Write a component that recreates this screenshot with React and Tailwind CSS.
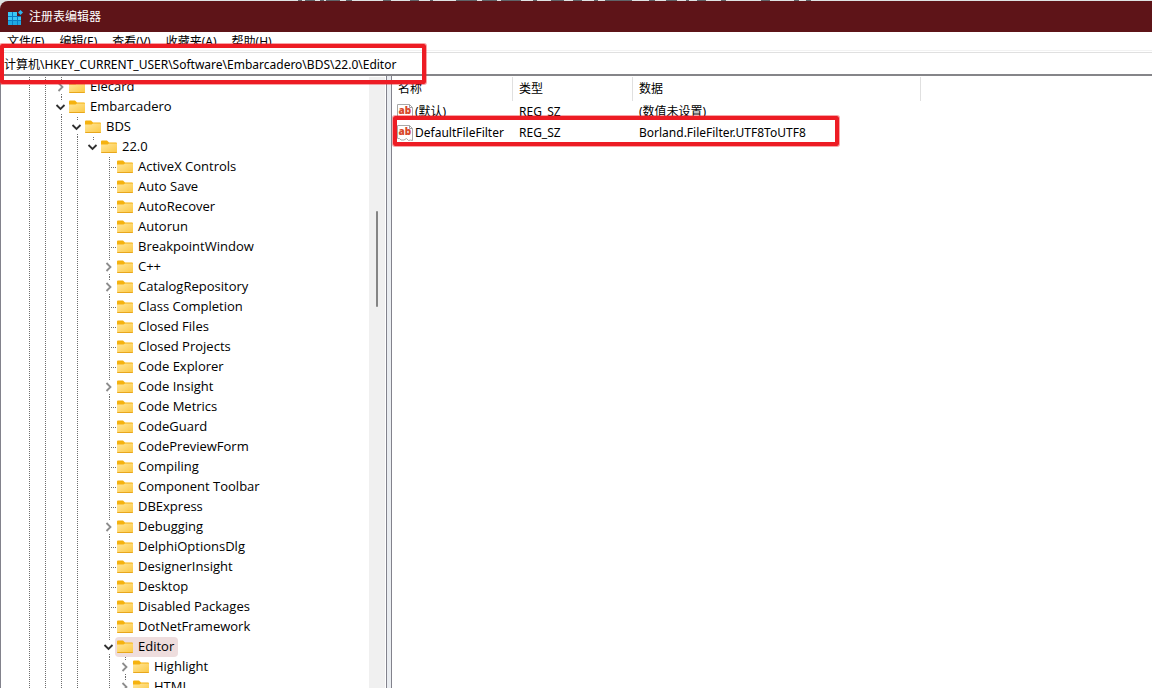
import React from "react";

const TREE = [
  { name: "Elecard", depth: 2, state: "closed" },
  { name: "Embarcadero", depth: 2, state: "open" },
  { name: "BDS", depth: 3, state: "open" },
  { name: "22.0", depth: 4, state: "open", last: true },
  { name: "ActiveX Controls", depth: 5 },
  { name: "Auto Save", depth: 5 },
  { name: "AutoRecover", depth: 5 },
  { name: "Autorun", depth: 5 },
  { name: "BreakpointWindow", depth: 5 },
  { name: "C++", depth: 5, state: "closed" },
  { name: "CatalogRepository", depth: 5, state: "closed" },
  { name: "Class Completion", depth: 5 },
  { name: "Closed Files", depth: 5 },
  { name: "Closed Projects", depth: 5 },
  { name: "Code Explorer", depth: 5 },
  { name: "Code Insight", depth: 5, state: "closed" },
  { name: "Code Metrics", depth: 5 },
  { name: "CodeGuard", depth: 5 },
  { name: "CodePreviewForm", depth: 5 },
  { name: "Compiling", depth: 5 },
  { name: "Component Toolbar", depth: 5 },
  { name: "DBExpress", depth: 5 },
  { name: "Debugging", depth: 5, state: "closed" },
  { name: "DelphiOptionsDlg", depth: 5 },
  { name: "DesignerInsight", depth: 5 },
  { name: "Desktop", depth: 5 },
  { name: "Disabled Packages", depth: 5 },
  { name: "DotNetFramework", depth: 5 },
  { name: "Editor", depth: 5, state: "open", selected: true },
  { name: "Highlight", depth: 6, state: "closed" },
  { name: "HTML", depth: 6, state: "closed" },
];

const VALUES = [
  { name: "(默认)", type: "REG_SZ", data: "(数值未设置)" },
  {
    name: "DefaultFileFilter",
    type: "REG_SZ",
    data: "Borland.FileFilter.UTF8ToUTF8",
  },
];

const MENU = ["文件(F)", "编辑(E)", "查看(V)", "收藏夹(A)", "帮助(H)"];

const RegeditIcon = () => (
  <svg className="h-4 w-4" viewBox="0 0 16 16" aria-hidden="true">
    <path d="M1 3h9v4h4v9H1z" fill="#0a7cc4" />
    <path
      d="M1 3h4v4H1zM6 3h4v4H6zM1 8h4v3H1zM6 8h4v3H6zM11 8h3v3h-3zM1 12h4v4H1zM6 12h4v4H6zM11 12h3v4h-3z"
      fill="#3cc8f4"
    />
    <path d="M1 12h4v4H1zM6 12h4v4H6zM11 12h3v4h-3z" fill="#1fa6e2" />
    <path d="M13.5 1l2.5 2.5L13.5 6 11 3.5z" fill="#2fb4ec" />
  </svg>
);

const FolderIcon = () => (
  <svg className="h-4 w-4 shrink-0" viewBox="0 0 16 16" aria-hidden="true">
    <defs>
      <linearGradient id="folder" x1="0" y1="0" x2="1" y2="1">
        <stop offset="0" stopColor="#ffe69a" />
        <stop offset="1" stopColor="#fcc842" />
      </linearGradient>
    </defs>
    <path d="M0 2.5Q0 1.5 1 1.5h5L8 3.5h7q1 0 1 1V8H0z" fill="#f5b20f" />
    <path d="M0 5.5h6.5L8 4.5h8V13q0 1-1 1H1q-1 0-1-1z" fill="url(#folder)" />
    <path d="M0 13h16q0 1-1 1H1q-1 0-1-1z" fill="#e8a71c" />
  </svg>
);

const StringIcon = () => (
  <svg className="h-4 w-4 shrink-0" viewBox="0 0 16 16" aria-hidden="true">
    <path
      d="M.5 13.5V.5h12l3 3v12l-2-.5-2 .5-2-2-2.5 1.5-3 0-1.5-1.5z"
      fill="#fff"
      stroke="#a8a8a8"
    />
    <path d="M12.5.5v3h3" fill="none" stroke="#a0a0a0" />
    <text
      x="1.5"
      y="10"
      fontSize="10"
      fontWeight="800"
      fontFamily="Open Sans, sans-serif"
      fill="#d8482a"
    >
      ab
    </text>
  </svg>
);

const Chevron = ({ open }) => (
  <svg
    className="h-2.5 w-4 shrink-0"
    viewBox="0 0 16 10"
    fill="none"
    strokeWidth="1.8"
    aria-hidden="true"
  >
    {open ? (
      <path d="M3.5 3l4 4 4-4" stroke="#303030" />
    ) : (
      <path d="M5.5 1l4 4-4 4" stroke="#8c8c8c" />
    )}
  </svg>
);

const Dots = ({ className = "" }) => (
  <span
    className={`w-px bg-[repeating-linear-gradient(to_bottom,#6e6e6e_0_1px,transparent_1px_2px)] ${className}`}
  />
);

const TreeRow = ({ name, depth, state, last, selected }) => (
  <li className="flex h-5 items-stretch pl-5">
    {Array.from({ length: depth }, (_, i) => (
      // 22.0 is the last key of its branch, so nothing continues below it
      <span key={i} className="flex w-4 shrink-0 justify-center pl-px">
        {i !== 4 && <Dots />}
      </span>
    ))}
    {state ? (
      <button
        type="button"
        aria-label={name}
        aria-expanded={state === "open"}
        className="flex w-4 shrink-0 flex-col items-center justify-between"
      >
        <Dots className="ml-px h-[3px]" />
        <Chevron open={state === "open"} />
        <Dots className={last ? "ml-px h-[3px] invisible" : "ml-px h-[3px]"} />
      </button>
    ) : (
      <span className="flex w-4 shrink-0 items-center pl-2">
        <Dots className="h-5" />
        <span className="h-px flex-1 bg-[repeating-linear-gradient(to_right,transparent_0_1px,#6e6e6e_1px_2px)]" />
      </span>
    )}
    <span
      className={`-ml-0.5 flex items-center gap-[5px] rounded-sm pr-1 pl-0.5 whitespace-nowrap ${
        selected ? "bg-[#eedddd]" : ""
      }`}
    >
      <FolderIcon />
      {name}
    </span>
  </li>
);

const App = () => {
  return (
    <div className="relative flex h-screen flex-col overflow-hidden bg-white font-['Noto_Sans','Noto_Sans_CJK_SC',sans-serif] text-xs text-black">
      {/* sliver of the window behind */}
      <div className="h-px shrink-0 overflow-hidden bg-[#dfe3e3] pl-[298px]">
        <svg className="block h-px w-[530px]" viewBox="0 0 530 1" aria-hidden="true">
          <path
            d="M0 .5h4m3 0h10m5 0h4m2 0h14m6 0h6m31 0h8m19 0h9m11 0h3m23 0h21m5 0h15m4 0h20m12 0h4m14 0h13m9 0h9m12 0h4m7 0h27m17 0h6m11 0h11m9 0h3m8 0h9m15 0h5m35 0h9m24 0h5m7 0h5"
            stroke="#5f6468"
          />
        </svg>
      </div>
      <div className="shrink-0 bg-[#dfe3e3]">
        <header className="flex h-[31px] items-center gap-1.5 rounded-tl-lg bg-[#5e1418] pl-[7px] text-white">
          <RegeditIcon />
          <h1>注册表编辑器</h1>
        </header>
      </div>

      <nav className="flex h-[19px] shrink-0 items-center gap-[15px] border-b border-[#f2f2f2] pt-0.5 pl-[7px]">
        {MENU.map((item) => (
          <button key={item} type="button">
            {item}
          </button>
        ))}
      </nav>

      <input
        type="text"
        aria-label="地址"
        className="mt-px h-6 w-full shrink-0 border-t border-b-2 border-t-[#e0e0e0] border-b-[#858589] pl-1 outline-none"
        defaultValue="计算机\HKEY_CURRENT_USER\Software\Embarcadero\BDS\22.0\Editor"
      />

      <main className="flex min-h-0 flex-1">
        <div className="flex w-[386px] shrink-0 border-l border-[#82828c] pt-px pr-px">
          <ul className="min-w-0 flex-1 overflow-hidden font-['Open_Sans',sans-serif] text-[13px]">
            {TREE.map((node) => (
              <TreeRow key={node.name} {...node} />
            ))}
          </ul>
          <div className="w-4 bg-[#f0f0f0] pt-[134px] pl-[7px]">
            <div className="h-24 w-0.5 rounded-full bg-[#858585]" />
          </div>
        </div>
        <div className="w-1.5 shrink-0 border-x border-[#82828c] bg-[#eaedf1]" />

        <div className="min-w-0 flex-1 pt-px">
          <table className="table-fixed border-separate border-spacing-0 text-left whitespace-nowrap">
            <thead>
              <tr className="h-6">
                <th className="w-[121px] border-r border-[#e0e0e0] p-0 pl-1.5 font-normal">
                  名称
                </th>
                <th className="w-[120px] border-r border-[#e0e0e0] p-0 pl-1.5 font-normal">
                  类型
                </th>
                <th className="w-[288px] border-r border-[#e0e0e0] p-0 pl-1.5 font-normal">
                  数据
                </th>
              </tr>
            </thead>
            <tbody>
              {VALUES.map((value) => (
                <tr key={value.name} className="h-[21px]">
                  <td className="p-0 pl-[5px]">
                    <span className="flex items-center gap-0.5">
                      <StringIcon />
                      {value.name}
                    </span>
                  </td>
                  <td className="p-0 pl-1.5">{value.type}</td>
                  <td className="p-0 pl-1.5">{value.data}</td>
                </tr>
              ))}
            </tbody>
          </table>
        </div>
      </main>

      {/* highlight boxes over the address bar and the changed value */}
      <div className="pointer-events-none absolute top-11 left-0 h-10 w-[426px] rounded-xs border-4 border-[#ed1c24] ring-1 ring-[#ed1c24]/40" />
      <div className="pointer-events-none absolute top-[116px] left-[393px] h-[30px] w-[446px] rounded-xs border-4 border-[#ed1c24] ring-1 ring-[#ed1c24]/40" />
    </div>
  );
};

export default App;
